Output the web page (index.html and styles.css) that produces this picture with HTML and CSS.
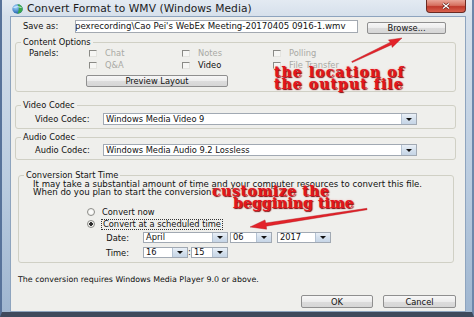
FILE: index.html
```html
<!DOCTYPE html>
<html>
<head>
<meta charset="utf-8">
<title>Convert Format to WMV</title>
<link rel="stylesheet" href="styles.css">
</head>
<body>
<div class="window">
  <div class="titlebar">
    <svg class="app-icon" width="11" height="10" viewBox="0 0 11 10">
      <defs>
        <radialGradient id="gb" cx="35%" cy="30%" r="75%">
          <stop offset="0" stop-color="#9fd6ff"/>
          <stop offset="1" stop-color="#1b5aa8"/>
        </radialGradient>
      </defs>
      <ellipse cx="5.5" cy="5" rx="5.2" ry="4.7" fill="url(#gb)"/>
      <path d="M5.5 0.3 A5.2 4.7 0 0 1 5.5 9.7 Q8 5 5.5 0.3 Z" fill="#39a84a"/>
      <path d="M1.5 3.5 Q5.5 1.8 9.5 3.5" stroke="#e8f6ff" stroke-width="0.8" fill="none"/>
    </svg>
    <span class="title">Convert Format to WMV (Windows Media)</span>
    <div class="close">
      <svg width="10" height="8" viewBox="0 0 10 8"><path d="M2 1.5 L8 6.5 M8 1.5 L2 6.5" stroke="#5a1a14" stroke-width="2.6"/><path d="M2 1.5 L8 6.5 M8 1.5 L2 6.5" stroke="#fff" stroke-width="1.4"/></svg>
    </div>
  </div>

  <div class="client">
    <div class="save-row">
      <span class="save-label">Save as:</span>
      <div class="path-input"><span class="path-text">pexrecording\Cao Pei's WebEx Meeting-20170405 0916-1.wmv</span></div>
      <div class="btn browse">Browse...</div>
    </div>

    <fieldset class="group group-content">
      <legend>Content Options</legend>
      <div class="panels">
        <span class="panels-label">Panels:</span>
        <span class="check disabled"><i class="box"></i>Chat</span>
        <span class="check disabled"><i class="box"></i>Notes</span>
        <span class="check disabled"><i class="box"></i>Polling</span>
        <span></span>
        <span class="check disabled"><i class="box"></i>Q&amp;A</span>
        <span class="check"><i class="box"></i>Video</span>
        <span class="check disabled"><i class="box"></i>File Transfer</span>
      </div>
      <div class="btn preview">Preview Layout</div>
    </fieldset>

    <fieldset class="group group-video">
      <legend>Video Codec</legend>
      <div class="codec-row">
        <span class="codec-label">Video Codec:</span>
        <div class="select w314"><span class="val">Windows Media Video 9</span><span class="drop"></span></div>
      </div>
    </fieldset>

    <fieldset class="group group-audio">
      <legend>Audio Codec</legend>
      <div class="codec-row">
        <span class="codec-label">Audio Codec:</span>
        <div class="select w314"><span class="val">Windows Media Audio 9.2 Lossless</span><span class="drop"></span></div>
      </div>
    </fieldset>

    <fieldset class="group group-time">
      <legend>Conversion Start Time</legend>
      <p class="info">It may take a substantial amount of time and your computer resources to convert this file.<br>When do you plan to start the conversion?</p>
      <div class="radio-row"><i class="radio"></i><span>Convert now</span></div>
      <div class="radio-row"><i class="radio on"></i><span class="focus">Convert at a scheduled time</span></div>
      <div class="schedule">
        <span class="sched-label">Date:</span>
        <div class="sched-fields">
          <div class="select small w85"><span class="val">April</span><span class="drop"></span></div>
          <div class="select small w42 gap2"><span class="val">06</span><span class="drop"></span></div>
          <div class="select small w54 gap5"><span class="val">2017</span><span class="drop"></span></div>
        </div>
        <span class="sched-label">Time:</span>
        <div class="sched-fields">
          <div class="select small w45"><span class="val">16</span><span class="drop"></span></div>
          <span class="colon">:</span>
          <div class="select small w37"><span class="val">15</span><span class="drop"></span></div>
        </div>
      </div>
    </fieldset>

    <p class="footer-note">The conversion requires Windows Media Player 9.0 or above.</p>

    <div class="actions">
      <div class="btn action">OK</div>
      <div class="btn action cancel">Cancel</div>
    </div>
  </div>

  <svg class="arrows" width="474" height="317" viewBox="0 0 474 317">
    <g fill="#e3232a" stroke="#b0121a" stroke-width="0.4">
      <polygon points="351.7,61.5 390.4,42.2 388.4,39.9 402,38 392.2,47.4 391.6,44.7 352.3,62.6"/>
      <polygon points="366.9,208.3 265.7,223.0 265.0,219.9 250,227 266.6,229.2 266.3,226.2 367.1,209.7"/>
    </g>
  </svg>

  <div class="annot annot-file">the location of<br>the output file</div>
  <div class="annot annot-time">customize the<br><span class="indent">beggining time</span></div>
</div>
</body>
</html>
```

FILE: styles.css
```css
* { box-sizing: border-box; }

html, body {
  margin: 0;
  padding: 0;
}

body {
  width: 474px;
  height: 317px;
  overflow: hidden;
  background: #2e3440;
  font-family: "DejaVu Sans", Verdana, sans-serif;
  font-size: 8.3px;
  color: #111;
}

.window {
  position: relative;
  width: 474px;
  height: 317px;
  display: flex;
  flex-direction: column;
  background: linear-gradient(to bottom, #e3eaf2 0, #d6e0eb 16px, #b9cbdf 60%, #9fb6d0 100%);
  border-left: 2px solid #58739a;
  border-right: 2px solid #6d87aa;
  border-bottom: 5px solid #3f4a5c;
}

/* ---------- title bar ---------- */
.titlebar {
  height: 16px;
  flex: none;
  display: flex;
  align-items: center;
  padding-left: 10px;
  position: relative;
}

.app-icon {
  flex: none;
  margin-top: 1px;
}

.title {
  margin-left: 4px;
  font-size: 10.7px;
  color: #1c1c1c;
  letter-spacing: 0.05px;
  white-space: nowrap;
}

.close {
  position: absolute;
  top: 0;
  left: 424px;
  width: 40px;
  height: 13px;
  border: 1px solid #6b2a22;
  border-top: none;
  border-radius: 0 0 4px 4px;
  background: linear-gradient(to bottom, #e9a598 0, #d6705f 45%, #c0392b 55%, #d9624e 100%);
  display: flex;
  align-items: center;
  justify-content: center;
}

/* ---------- client area ---------- */
.client {
  flex: none;
  height: 296px;
  margin: 0 6px 0 8px;
  background: #efefec;
  border: 1px solid #8ea4be;
  padding: 0 9px 0 4px;
  display: flex;
  flex-direction: column;
}

.save-row {
  display: flex;
  align-items: flex-start;
  margin-top: 3px;
  height: 13px;
}

.save-label {
  width: 52px;
  margin-left: 8px;
  line-height: 13px;
}

.path-input {
  width: 283px;
  height: 13px;
  background: #fff;
  border: 1px solid #a3a9b1;
  overflow: hidden;
  white-space: nowrap;
}

.path-text {
  display: block;
  margin-left: -1px;
  font-size: 8.6px;
  line-height: 11px;
}

.btn {
  height: 12px;
  border: 1px solid #8f8f8f;
  border-radius: 2px;
  background: linear-gradient(to bottom, #f7f7f7 0, #ececec 50%, #dcdcdc 51%, #d6d6d6 100%);
  display: flex;
  align-items: center;
  justify-content: center;
  line-height: 10px;
  color: #111;
}

.browse {
  width: 79px;
  margin-left: 9px;
  margin-top: 2px;
}

/* ---------- group boxes ---------- */
.group {
  margin: 0;
  padding: 0;
  border: 1px solid #d0d0c5;
  border-radius: 3px;
  min-width: 0;
}

.group legend {
  margin-left: 5px;
  padding: 0 2px;
  height: 10px;
  line-height: 10px;
}

.group-content { margin-top: 4px; }
.group-video { margin-top: 8px; }
.group-audio { margin-top: 3px; }
.group-time { margin: 10px 2px 0 3px; }

.panels {
  display: grid;
  grid-template-columns: 60px 93px 91px 1fr;
  grid-auto-rows: 12px;
  align-items: center;
  padding-left: 13px;
}

.check {
  display: flex;
  align-items: center;
  white-space: nowrap;
}

.check.disabled { color: #a9a9a4; }

.box {
  display: block;
  width: 8px;
  height: 7px;
  margin-right: 8px;
  border: 1px solid;
  border-color: #8a8a86 #e4e4e0 #e4e4e0 #8a8a86;
  background: #f6f6f4;
}

.preview {
  width: 142px;
  margin: 4px 0 4px 70px;
}

.codec-row {
  display: grid;
  grid-template-columns: 68px auto;
  align-items: center;
  padding: 3px 0 3px 19px;
}

.group-audio .codec-row { padding-top: 2px; }

/* ---------- selects ---------- */
.select {
  display: flex;
  height: 12px;
  border: 1px solid #a1a9b3;
  background: #fff;
}

.select.small { height: 11px; }

.select .val {
  flex: 1;
  padding-left: 2px;
  line-height: 10px;
  overflow: hidden;
  white-space: nowrap;
}

.select.small .val { line-height: 9px; }

.select .drop {
  flex: none;
  width: 15px;
  border-left: 1px solid #b4c2d2;
  background: linear-gradient(to bottom, #eaf0f7 0, #d4e0ed 50%, #c6d5e6 100%);
  display: flex;
  align-items: center;
  justify-content: center;
}

.select .drop::after {
  content: "";
  border-left: 3px solid transparent;
  border-right: 3px solid transparent;
  border-top: 3px solid #111;
}

.w314 { width: 314px; }
.w85 { width: 85px; }
.w42 { width: 42px; }
.w54 { width: 54px; }
.w45 { width: 45px; }
.w37 { width: 37px; }
.gap2 { margin-left: 2px; }
.gap5 { margin-left: 5px; }

/* ---------- conversion time ---------- */
.info {
  margin: 1px 0 0 0;
  padding-left: 14px;
  line-height: 7.5px;
  font-size: 8.6px;
  white-space: nowrap;
}

.radio-row {
  display: flex;
  align-items: center;
  height: 12px;
  padding-left: 68px;
}

.info + .radio-row { margin-top: 10px; }

.radio {
  display: block;
  width: 8px;
  height: 8px;
  margin-right: 7px;
  border-radius: 50%;
  border: 1px solid #8c8c88;
  background: radial-gradient(circle, #ffffff 0, #eeeeea 100%);
  position: relative;
}

.radio.on {
  background: radial-gradient(circle, #222 0, #333 1.6px, #f3f3f0 2px, #e9e9e5 100%);
}

.focus {
  outline: 1px dotted #333;
  outline-offset: 0;
  padding: 0 1px;
  line-height: 9px;
}

.schedule {
  display: grid;
  grid-template-columns: 41px auto;
  column-gap: 14px;
  row-gap: 4px;
  align-items: center;
  margin: 2px 0 4px 69px;
}

.sched-label { text-align: right; }

.sched-fields {
  display: flex;
  align-items: center;
}

.colon {
  width: 3px;
  text-align: center;
  line-height: 9px;
}

/* ---------- footer ---------- */
.footer-note {
  margin: 12px 0 0 0;
  padding-left: 3px;
  line-height: 9px;
  font-size: 7.9px;
  white-space: nowrap;
}

.actions {
  display: flex;
  justify-content: flex-end;
  gap: 10px;
  margin-top: 11px;
}

.action {
  width: 72px;
  height: 13px;
}

.action.cancel { width: 73px; }

/* ---------- annotations overlay ---------- */
.arrows {
  position: absolute;
  left: -2px;
  top: 0;
  pointer-events: none;
}

.annot {
  position: absolute;
  font-family: "DejaVu Serif", "Liberation Serif", serif;
  font-weight: bold;
  font-size: 14px;
  line-height: 12px;
  letter-spacing: 0.6px;
  color: #e3151d;
  text-shadow: 1px 1px 1px #7c0b0b, 0 0 2px rgba(255, 140, 140, 0.7);
  white-space: nowrap;
}

.annot-file {
  left: 272px;
  top: 66px;
  letter-spacing: 1.1px;
}

.annot-time {
  left: 210px;
  top: 185px;
}

.annot-time .indent {
  margin-left: 21px;
  letter-spacing: 0.1px;
}
```
